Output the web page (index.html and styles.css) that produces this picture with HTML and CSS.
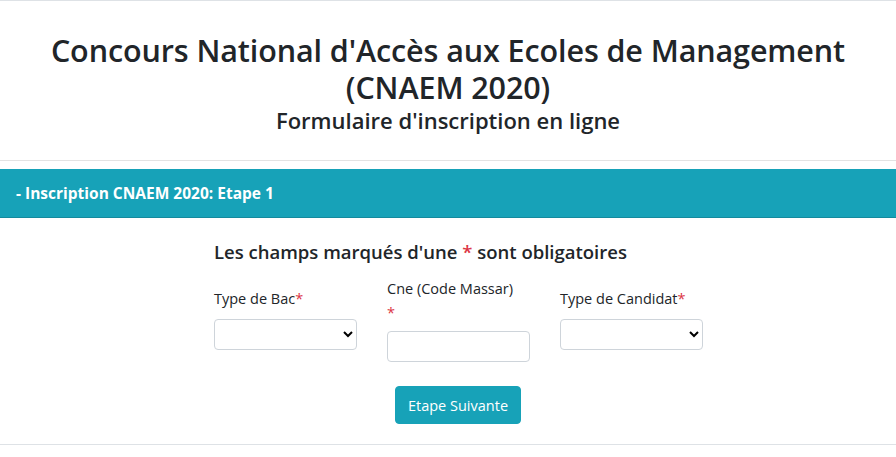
FILE: index.html
```html
<!DOCTYPE html>
<html lang="fr">
	<head>
		<meta charset="UTF-8" />
		<meta name="viewport" content="width=device-width, initial-scale=1.0" />
		<title>CNAEM 2020 - Inscription</title>
		<link rel="stylesheet" href="styles.css">
	</head>
	<body>
		<div id="page">
			<header class="intro">
				<h2>Concours National d'Accès aux Ecoles de Management (CNAEM 2020)</h2>
				<h4>Formulaire d'inscription en ligne</h4>
			</header>
			<div class="card">
				<div class="card-header">- Inscription CNAEM 2020: Etape 1</div>
				<form class="card-body">
					<h5>Les champs marqués d'une <span class="req">*</span> sont obligatoires</h5>
					<div class="row">
						<div class="field">
							<label>Type de Bac<span class="req">*</span></label>
							<select></select>
						</div>
						<div class="field">
							<label>Cne (Code Massar)<br><span class="req">*</span></label>
							<input type="text" />
						</div>
						<div class="field">
							<label>Type de Candidat<span class="req">*</span></label>
							<select></select>
						</div>
					</div>
					<div class="actions">
						<button type="button" class="btn">Etape Suivante</button>
					</div>
				</form>
			</div>
		</div>
	</body>
</html>
```

FILE: styles.css
```css
body {
	margin: 0;
	font-family: "Open Sans", "Noto Sans", sans-serif;
	color: #212529;
	background: #fff;
}
#page {
	border-top: 1px solid #dee2e6;
	border-bottom: 1px solid #dee2e6;
	height: 443px;
}

.intro {
	text-align: center;
	padding: 31px 40px 0;
	border-bottom: 1px solid #e3e3e3;
	padding-bottom: 26px;
}
.intro h2 {
	margin: 0;
	font-size: 30.5px;
	font-weight: 600;
	line-height: 37px;
	letter-spacing: -0.1px;
}
.intro h4 {
	margin: 0;
	font-size: 22px;
	font-weight: 600;
	line-height: 28px;
}

.card {
	margin-top: 8px;
}
.card-header {
	background-color: #17a2b8;
	color: #fff;
	font-weight: bold;
	font-size: 15.5px;
	height: 48px;
	line-height: 48px;
	padding: 0 16px;
	border-bottom: 1px solid #148a9d;
}
.card-body {
	width: 488px;
	margin-left: 214px;
	padding-top: 21px;
}
.card-body h5 {
	margin: 0 0 12px;
	font-size: 18.5px;
	font-weight: 600;
	line-height: 26px;
}
.req {
	color: #dc3545;
}

.row {
	display: grid;
	grid-template-columns: repeat(3, 143px);
	column-gap: 30px;
	align-items: start;
}
.field label {
	display: block;
	font-size: 14.5px;
	line-height: 24px;
	margin-bottom: 8px;
}
.field:first-child,
.field:last-child {
	padding-top: 10px;
}
.field select,
.field input {
	display: block;
	box-sizing: border-box;
	width: 143px;
	height: 31px;
	border: 1px solid #ced4da;
	border-radius: 4px;
	background: #fff;
	font: inherit;
}
.field input {
	margin-top: -2px;
}

.actions {
	text-align: center;
	margin-top: 24px;
}
.btn {
	background-color: #17a2b8;
	border: 1px solid #17a2b8;
	color: #fff;
	font-family: inherit;
	font-size: 14.5px;
	height: 38px;
	padding: 0 12px;
	border-radius: 4px;
}
```
